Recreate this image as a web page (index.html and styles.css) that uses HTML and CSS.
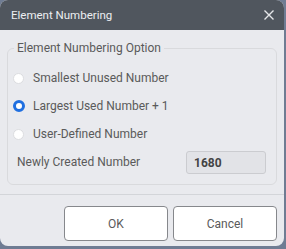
FILE: index.html
```html
<!DOCTYPE html>
<html lang="en">
<head>
  <meta charset="UTF-8">
  <title>Element Numbering</title>
  <link rel="stylesheet" href="styles.css">
</head>
<body>
  <div class="dialog">
    <div class="titlebar">
      <span>Element Numbering</span>
      <svg class="close" width="12" height="12" viewBox="0 0 12 12">
        <path d="M1.5 1.5 L10.5 10.5 M10.5 1.5 L1.5 10.5" stroke="#e6e7ea" stroke-width="1.4" fill="none"/>
      </svg>
    </div>
    <div class="content">
      <fieldset class="group">
        <legend>Element Numbering Option</legend>
        <label class="row"><span class="radio"></span>Smallest Unused Number</label>
        <label class="row"><span class="radio checked"></span>Largest Used Number + 1</label>
        <label class="row"><span class="radio"></span>User-Defined Number</label>
        <div class="row field">
          <span>Newly Created Number</span>
          <div class="number">1680</div>
        </div>
      </fieldset>
    </div>
    <div class="footer">
      <button class="btn">OK</button>
      <button class="btn">Cancel</button>
    </div>
  </div>
</body>
</html>
```

FILE: styles.css
```css
body {
  margin: 0;
  width: 286px;
  height: 249px;
  background: #6f7c93;
  font-family: Roboto, sans-serif;
  font-size: 12px;
  color: #5a5a5a;
}

.dialog {
  width: 284px;
  height: 246px;
  background: #e9eaee;
  border-radius: 8px;
  overflow: hidden;
  display: flex;
  flex-direction: column;
}

.titlebar {
  height: 30px;
  background: #50565e;
  color: #eceef1;
  font-size: 11.5px;
  display: flex;
  align-items: center;
  justify-content: space-between;
  padding: 0 9px 0 11px;
}

.content {
  padding: 11px 7px 0 7px;
}

.group {
  margin: 0;
  padding: 9px 10px 0 5px;
  height: 133px;
  border: 1px solid #d9dadd;
  border-radius: 6px;
}

.group legend {
  padding: 0 3px;
  margin-left: 1px;
}

.row {
  display: flex;
  align-items: center;
  height: 28px;
}

.radio {
  width: 11px;
  height: 11px;
  border-radius: 50%;
  background: #fff;
  border: 1px solid #dcdde0;
  margin-right: 9px;
  box-sizing: border-box;
}

.radio.checked {
  border: 3px solid #1f6fe0;
  width: 12px;
  height: 12px;
  margin-right: 8px;
}

.field {
  justify-content: space-between;
  padding-left: 4px;
}

.number {
  width: 80px;
  height: 23px;
  box-sizing: border-box;
  background: #e2e3e7;
  border: 1px solid #cbccd0;
  border-radius: 3px;
  padding: 4px 0 0 7px;
  color: #444;
  font-weight: bold;
}

.footer {
  margin-top: 9px;
  border-top: 1px solid #d3d5d9;
  display: flex;
  justify-content: flex-end;
  gap: 5px;
  padding: 11px 7px 0 0;
}

.btn {
  width: 104px;
  height: 35px;
  background: #fff;
  border: 1px solid #86888c;
  border-radius: 4px;
  font-family: Roboto, sans-serif;
  font-size: 12px;
  color: #5a5a5a;
}
```
